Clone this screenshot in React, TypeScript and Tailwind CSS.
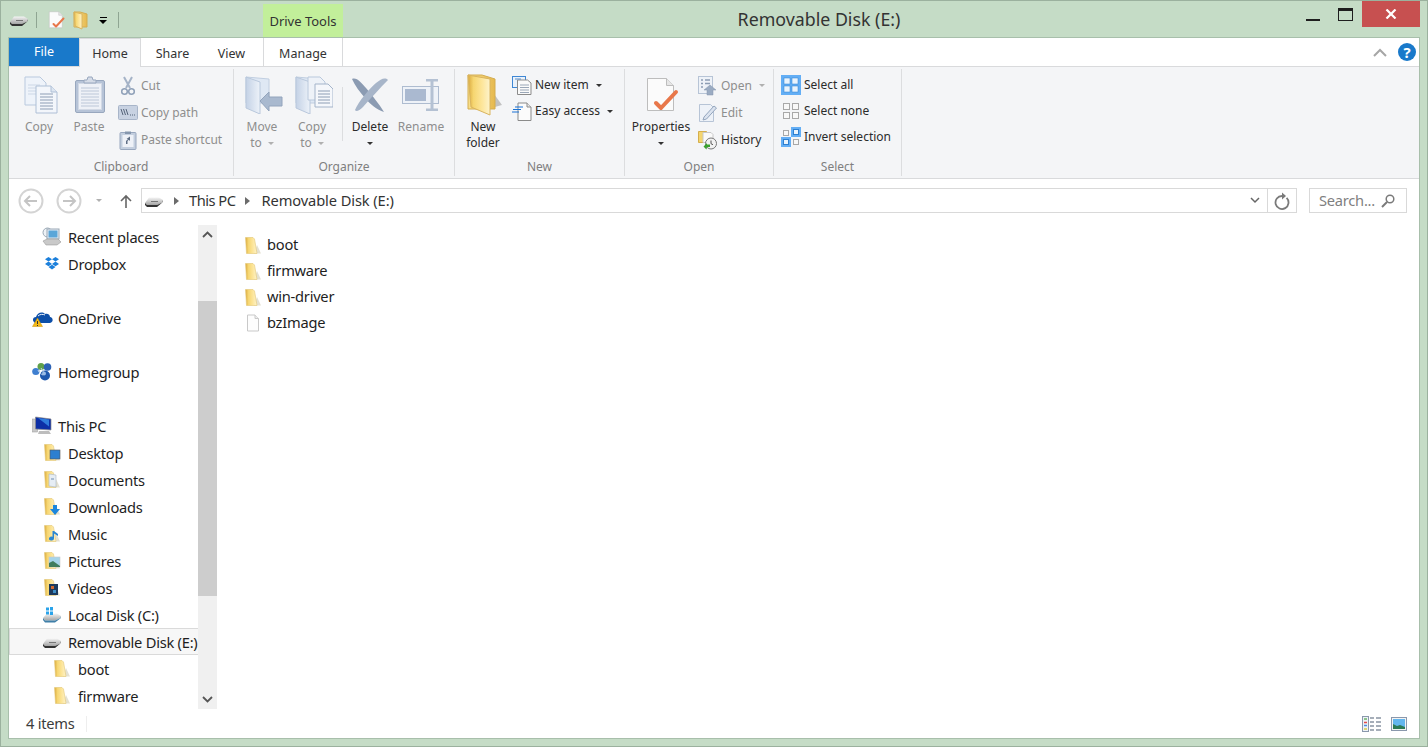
import { ReactNode } from "react";

// Shared gradients for the folder art
function Defs() {
  return (
    <svg width="0" height="0" className="absolute">
      <defs>
        <linearGradient id="fold" x1="0" y1="0" x2="1" y2="0">
          <stop offset="0" stopColor="#d9a93e" />
          <stop offset="0.25" stopColor="#f6d671" />
          <stop offset="0.65" stopColor="#fde69c" />
          <stop offset="1" stopColor="#fdf3cc" />
        </linearGradient>
        <linearGradient id="foldBack" x1="0" y1="0" x2="1" y2="0">
          <stop offset="0" stopColor="#f8df8b" />
          <stop offset="1" stopColor="#e6b94f" />
        </linearGradient>
        <linearGradient id="grayFold" x1="0" y1="0" x2="1" y2="0">
          <stop offset="0" stopColor="#c4d2e6" />
          <stop offset="1" stopColor="#edf2f9" />
        </linearGradient>
        <linearGradient id="drive" x1="0" y1="0" x2="0" y2="1">
          <stop offset="0" stopColor="#f4f4f4" />
          <stop offset="1" stopColor="#a4a4a4" />
        </linearGradient>
      </defs>
    </svg>
  );
}

function SmallFolder({ children }: { children?: ReactNode }) {
  return (
    <svg width="18" height="19" viewBox="0 0 18 19">
      <path d="M10 17.500h7L13 9Z" fill="#e4e1d2" />
      <path d="M1.500 1.500H9L10.500 3 13 17.500H2.500Z" fill="url(#fold)" stroke="#e3c673" strokeWidth="0.600" />
      {children}
    </svg>
  );
}

function Drive() {
  return (
    <svg width="20" height="14" viewBox="0 0 20 14">
      <path d="M1 9 5 3.500H15L19 6 18.500 8.500 13 11H3Z" fill="url(#drive)" />
      <path d="M1 9 3 11H13L18.500 8.500 19 6V8L13 13H3L1 11Z" fill="#333333" />
      <path d="M7 7.500h7" stroke="#777777" />
    </svg>
  );
}

function LocalDisk() {
  return (
    <svg width="20" height="18" viewBox="0 0 20 18">
      <path d="M1 12 5 7.500h10L19 10 18.500 12 13 14.500H3Z" fill="url(#drive)" />
      <path d="M1 12 3 14.500H13L18.500 12 19 10v2L13 16.500H3L1 14Z" fill="#3f7fa8" />
      <path d="M4 1.500h3v3H4Zm4-.5h3v3.500H8ZM4 5.500h3v3H4Zm4 0h3V9H8Z" fill="#2aa3ea" />
    </svg>
  );
}

function BlankFile() {
  return (
    <svg width="18" height="18" viewBox="0 0 18 18">
      <path d="M3.500 1h7.500l3.500 3.500V17h-11Z" fill="#fdfdfd" stroke="#c9c9c9" />
      <path d="M11 1v3.500h3.500" fill="#eee" stroke="#c9c9c9" />
    </svg>
  );
}

// Document with orange tick, used large on the ribbon and small on the toolbar
function Properties({ size = 36 }: { size?: number }) {
  return (
    <svg width={size} height={size} viewBox="0 0 36 36">
      <path d="M4.500 1.500h19l7 7v25h-26Z" fill="#fbfbfb" stroke="#bdbdbd" />
      <path d="M23.500 1.500v7h7" fill="#e6e6e6" stroke="#bdbdbd" />
      <path d="M13 26l5 5 15-16" fill="none" stroke="#e8774a" strokeWidth="4" strokeLinecap="round" strokeLinejoin="round" />
    </svg>
  );
}

function CopyLarge() {
  return (
    <svg width="34" height="38" viewBox="0 0 34 38" className="ml-[3px]">
      <path d="M1 1h15l6 6v22H1Z" fill="#eef3fa" stroke="#b9c9de" />
      <path d="M4 9h12M4 12h12M4 15h12M4 18h12" stroke="#ccd7e6" />
      <path d="M12 10h15l6 6v21H12Z" fill="#f3f6fb" stroke="#aebfd6" />
      <path d="M27 10v6h6" fill="#dde6f1" stroke="#aebfd6" />
      <path d="M16 18h13M16 21h13M16 24h13M16 27h13M16 30h13M16 33h13" stroke="#8d9db4" />
    </svg>
  );
}

function PasteLarge() {
  return (
    <svg width="30" height="38" viewBox="0 0 30 38" className="ml-[2px]">
      <rect x="0.500" y="4.500" width="29" height="32" rx="1.500" fill="#b6c3d7" stroke="#98a7be" />
      <rect x="3.500" y="7.500" width="23" height="26" fill="#eef1f7" stroke="#d2d9e5" />
      <path d="M6 12h18M6 15h18M6 18h18M6 21h18M6 24h18M6 27h18M6 30h18" stroke="#bcc7d8" />
      <path d="M9 7V4h3l1-3h4l1 3h3v3Z" fill="#d4dbe7" stroke="#98a7be" />
    </svg>
  );
}

function CutIcon() {
  return (
    <svg width="14" height="20" viewBox="0 0 14 20">
      <path d="M3 1 9 12M11 1 5 12" stroke="#a5b3c7" strokeWidth="2" />
      <circle cx="3.500" cy="15.500" r="2.800" fill="none" stroke="#8fa0b8" strokeWidth="1.500" />
      <circle cx="10.500" cy="15.500" r="2.800" fill="none" stroke="#8fa0b8" strokeWidth="1.500" />
    </svg>
  );
}

function CopyPathIcon() {
  return (
    <svg width="20" height="15" viewBox="0 0 20 15">
      <rect x="0.500" y="0.500" width="19" height="14" rx="1" fill="#c8d2e2" stroke="#a8b5c9" />
      <path d="M3 4l2 6M5.500 4l2 6M8 4l2 6" stroke="#55647a" fill="none" />
      <path d="M12 10h1M14 10h1M16 10h1" stroke="#55647a" />
    </svg>
  );
}

function PasteShortcutIcon() {
  return (
    <svg width="18" height="20" viewBox="0 0 18 20">
      <rect x="1" y="2.500" width="16" height="17" rx="1" fill="#c3cede" stroke="#98a7be" />
      <rect x="3.500" y="5" width="11" height="12" fill="#eef1f7" />
      <path d="M6 1.500h6V4H6Z" fill="#8596ad" />
      <path d="M7 14v-3l2-2H7.500L11 6.500V11L9.800 9.700 8.500 11v3Z" fill="#5d6d84" />
    </svg>
  );
}

function MoveToIcon() {
  return (
    <svg width="38" height="38" viewBox="0 0 38 38" className="ml-[3px]">
      <path d="M1 1l23 2v24H1Z" fill="#dfe8f4" stroke="#c0cee0" />
      <path d="M1 1l14 5v32L1 32Z" fill="url(#grayFold)" stroke="#b9c8dc" />
      <path d="M15 25 24 16v5h13v9H24v5Z" fill="#a9b9cf" stroke="#93a4bc" />
    </svg>
  );
}

function CopyToIcon() {
  return (
    <svg width="38" height="38" viewBox="0 0 38 38" className="ml-[3px]">
      <path d="M1 1l23 2v24H1Z" fill="#dfe8f4" stroke="#c0cee0" />
      <path d="M1 1l14 5v32L1 32Z" fill="url(#grayFold)" stroke="#b9c8dc" />
      <path d="M13 1h12l5 5v18H13Z" fill="#eef2f8" stroke="#b9c8dc" />
      <path d="M20 8h13l5 5v18H20Z" fill="#f5f7fb" stroke="#a4b4ca" />
      <path d="M23 15h12M23 18h12M23 21h12M23 24h12M23 27h12" stroke="#8d9db4" />
    </svg>
  );
}

function DeleteIcon() {
  return (
    <svg width="38" height="36" viewBox="0 0 38 36">
      <path d="M1 2C6 0 10 6 15 11 21 18 28 27 33 35 26 33 19 27 14 21 9 15 4 9 1 2Z" fill="#8b9bb2" />
      <path d="M37 3C34 0 30 2 25 6 18 12 8 24 4 33 5 35 8 34 12 30 20 21 29 11 37 3Z" fill="#a7b5c9" />
    </svg>
  );
}

function RenameIcon() {
  return (
    <svg width="38" height="32" viewBox="0 0 38 32">
      <rect x="0.500" y="7.500" width="36" height="17" fill="#eef2f8" stroke="#aebcd0" />
      <rect x="3" y="10" width="21" height="12" fill="#aab9d0" />
      <path d="M24 1h12M24 31h12M30 1v30" stroke="#b4c1d3" strokeWidth="3" />
    </svg>
  );
}

function NewFolderLarge() {
  return (
    <svg width="36" height="42" viewBox="0 0 36 42" className="ml-[4px]">
      <path d="M17 36 35 31 27 20Z" fill="#c2c2c2" />
      <path d="M1 1h14l13 4v30H1Z" fill="url(#foldBack)" stroke="#d4ad51" />
      <path d="M1 1l22 4v36L4 33Z" fill="url(#fold)" stroke="#d9b45f" />
    </svg>
  );
}

function NewItemIcon() {
  return (
    <svg width="20" height="19" viewBox="0 0 20 19">
      <rect x="0.500" y="0.500" width="13" height="11" fill="#eaf2fb" stroke="#3f87d4" />
      <path d="M5.500 4h10l3.500 3v11.500H5.500Z" fill="#fafafa" stroke="#8b8b8b" />
      <path d="M8 9h9M8 11.500h9M8 14h9M8 16.500h9" stroke="#9aa7b8" />
      <path d="M3 3h6" stroke="#5c8fc7" />
    </svg>
  );
}

function EasyAccessIcon() {
  return (
    <svg width="20" height="19" viewBox="0 0 20 19">
      <path d="M6 1h9l4 4v13.500H6Z" fill="#fbfbfb" stroke="#8b8b8b" />
      <path d="M15 1v4h4" fill="#e8e8e8" stroke="#8b8b8b" />
      <path d="M3 5h8M1 7.500h8M0 10h7" stroke="#1a73d6" strokeWidth="1.200" />
    </svg>
  );
}

function OpenIcon() {
  return (
    <svg width="20" height="20" viewBox="0 0 20 20">
      <rect x="0.500" y="0.500" width="14" height="17" fill="#eef2f8" stroke="#b7c4d6" />
      <path d="M3 4h2M3 7.500h2M3 11h2M7 4h5M7 7.500h5" stroke="#8d9db4" strokeWidth="1.500" />
      <path d="M6 14l6-5 6 5h-3v5H9v-5Z" fill="#9aabc2" stroke="#8496ae" strokeWidth="0.500" />
    </svg>
  );
}

function EditIcon() {
  return (
    <svg width="20" height="20" viewBox="0 0 20 20">
      <path d="M1.500 1.500h11l3 3v14h-14Z" fill="#eef2f8" stroke="#b7c4d6" />
      <path d="M6 14 16 3l2.500 2-10 11-3.500 1Z" fill="#dbe3ef" stroke="#93a5bd" />
    </svg>
  );
}

function HistoryIcon() {
  return (
    <svg width="20" height="20" viewBox="0 0 20 20">
      <path d="M0.500 1.500h8l1 1v10h-9Z" fill="#f4d56f" stroke="#d5ae4c" />
      <path d="M5 2.500h8l2 2v8H5Z" fill="#fafafa" stroke="#c8c8c8" />
      <circle cx="13" cy="13.500" r="5.500" fill="#f2f2f2" stroke="#777" />
      <path d="M13 10.500v3.200l2 1" fill="none" stroke="#555" />
      <path d="M9 13 5.500 16.500 8.500 19.500 9 17h3v-2.500H9Z" fill="#3aa02e" />
    </svg>
  );
}

function SelectAllIcon() {
  return (
    <svg width="20" height="20" viewBox="0 0 20 20">
      <rect width="20" height="20" fill="#63aef5" />
      <rect x="3" y="3" width="6" height="6" fill="#e9f3fd" stroke="#2d7fd0" strokeWidth="0.500" />
      <rect x="11" y="3" width="6" height="6" fill="#e9f3fd" stroke="#2d7fd0" strokeWidth="0.500" />
      <rect x="3" y="11" width="6" height="6" fill="#e9f3fd" stroke="#2d7fd0" strokeWidth="0.500" />
      <rect x="11" y="11" width="6" height="6" fill="#e9f3fd" stroke="#2d7fd0" strokeWidth="0.500" />
    </svg>
  );
}

function SelectNoneIcon() {
  return (
    <svg width="20" height="20" viewBox="0 0 20 20" fill="#f8f8f8" stroke="#a8a8a8">
      <rect x="2.500" y="2.500" width="6" height="6" />
      <rect x="11.500" y="2.500" width="6" height="6" />
      <rect x="2.500" y="11.500" width="6" height="6" />
      <rect x="11.500" y="11.500" width="6" height="6" />
    </svg>
  );
}

function InvertIcon() {
  return (
    <svg width="20" height="20" viewBox="0 0 20 20">
      <rect x="2.500" y="3.500" width="5" height="5" fill="#f8f8f8" stroke="#a8a8a8" />
      <rect x="10" y="0" width="10" height="10" fill="#63aef5" />
      <rect x="12.500" y="2.500" width="5" height="5" fill="#e9f3fd" stroke="#2d7fd0" />
      <rect x="0" y="10" width="10" height="10" fill="#63aef5" />
      <rect x="2.500" y="12.500" width="5" height="5" fill="#e9f3fd" stroke="#2d7fd0" />
      <rect x="12.500" y="12.500" width="5" height="5" fill="#f8f8f8" stroke="#a8a8a8" />
    </svg>
  );
}

function RecentIcon() {
  return (
    <svg width="20" height="20" viewBox="0 0 20 20">
      <circle cx="5.500" cy="5.500" r="4.500" fill="#eef2f6" stroke="#9aa8b5" />
      <rect x="5" y="2" width="12" height="10" fill="#e6edf4" stroke="#9aa8b5" />
      <rect x="6.500" y="3.500" width="9" height="7" fill="#5aa6d8" />
      <path d="M1 14 5 12h11l3 3-4 3H4Z" fill="#c9c9c9" stroke="#8c8c8c" strokeWidth="0.500" />
    </svg>
  );
}

function DropboxIcon() {
  return (
    <svg width="14" height="13" viewBox="0 0 14 13" fill="#1b7fdb">
      <path d="M3.500 0 7 2.300 3.500 4.600 0 2.300Z" />
      <path d="M10.500 0 14 2.300 10.500 4.600 7 2.300Z" />
      <path d="M3.500 4.600 7 6.900 3.500 9.200 0 6.900Z" />
      <path d="M10.500 4.600 14 6.900 10.500 9.200 7 6.900Z" />
      <path d="M3.500 10 7 7.800 10.500 10 7 12.500Z" />
    </svg>
  );
}

function OneDriveIcon() {
  return (
    <svg width="21" height="18" viewBox="0 0 21 18">
      <path d="M2 13c-2-2-1-5 2-5 1-4 6-6 9-3 3-1 5 1 5 3 3 0 4 5 0 6H3Z" fill="#0d4fa8" />
      <path d="M6 7c2-2 5-2 7-1" stroke="#f4f8fd" strokeWidth="1" fill="none" />
      <path d="M5.500 9 0.500 17.500h10Z" fill="#f4b915" stroke="#c98f0b" strokeWidth="0.500" />
      <path d="M5.500 12v3M5.500 16v1" stroke="#333" />
    </svg>
  );
}

function HomegroupIcon() {
  return (
    <svg width="20" height="19" viewBox="0 0 20 19">
      <circle cx="9" cy="4.500" r="3.500" fill="#5fa04a" />
      <circle cx="15.500" cy="5" r="3.800" fill="#2c62b5" />
      <circle cx="3.800" cy="9.500" r="3.600" fill="#3f7fd0" />
      <circle cx="13" cy="13.500" r="5" fill="#1f58ad" />
      <path d="M6 8c1 3 3 4 5 5M9 6l3 5" stroke="#c5d8f0" fill="none" />
      <circle cx="12" cy="11.500" r="2" fill="#9dbde6" />
    </svg>
  );
}

function PcIcon() {
  return (
    <svg width="20" height="20" viewBox="0 0 20 20">
      <rect x="0.500" y="3" width="5" height="13" fill="#c8c8c8" stroke="#999" strokeWidth="0.500" />
      <path d="M3.500 1 19 3v11L3.500 13Z" fill="#0d2fa6" stroke="#8b8b8b" strokeWidth="0.700" />
      <path d="M6 2 17 3.500v7Z" fill="#2f7bdc" />
      <path d="M7 15h10l2 3H6Z" fill="#bdbdbd" />
    </svg>
  );
}

function ListViewIcon() {
  return (
    <svg width="20" height="16" viewBox="0 0 20 16">
      <rect x="0.500" y="0.500" width="6" height="15" fill="#eef2f6" stroke="#8a98ac" />
      <path d="M2 3h3" stroke="#6cb46a" strokeWidth="1.500" />
      <path d="M2 6.500h3" stroke="#e24a4a" strokeWidth="1.500" />
      <path d="M2 9.500h3" stroke="#4a8be2" strokeWidth="1.500" />
      <path d="M2 13h3" stroke="#d8cc47" strokeWidth="1.500" />
      <path d="M8 2h4M14 2h5M8 6h4M14 6h5M8 10h4M14 10h5M8 14h4M14 14h5" stroke="#4e5f75" strokeWidth="1.200" />
    </svg>
  );
}

function ThumbViewIcon() {
  return (
    <svg width="16" height="14" viewBox="0 0 16 14">
      <rect x="0.500" y="0.500" width="15" height="13" fill="#f3f3f3" stroke="#8a98ac" />
      <rect x="2" y="2" width="12" height="10" fill="#63b6ee" />
      <path d="M2 12V7l4 2 3-1 5 2v2Z" fill="#2c7a55" />
    </svg>
  );
}

function Caret({ dim }: { dim?: boolean }) {
  return (
    <span
      className={`block w-0 h-0 border-x-[3px] border-x-transparent border-t-[3px] ${
        dim ? "border-t-[#b0b0b0]" : "border-t-[#333333]"
      }`}
    />
  );
}

function BigButton({
  icon,
  lines,
  width,
  disabled,
  caret,
  className = "",
}: {
  icon: ReactNode;
  lines: string[];
  width: string;
  disabled?: boolean;
  caret?: boolean;
  className?: string;
}) {
  return (
    <div className={`${width} ${className} flex flex-col items-center shrink-0`}>
      <div className="h-[47px] pb-[2px] flex items-center justify-center">{icon}</div>
      <div className={`flex flex-col items-center text-[12px] leading-[16px] ${disabled ? "text-[#8e8e8e]" : "text-[#2b2b2b]"}`}>
        {lines.map((line, i) => (
          <div key={line} className="h-[16px] flex items-center gap-[6px] whitespace-nowrap">
            {line}
            {caret && i === lines.length - 1 && lines.length > 1 && <Caret dim={disabled} />}
          </div>
        ))}
        {caret && lines.length === 1 && (
          <div className="h-[16px] flex items-center">
            <Caret dim={disabled} />
          </div>
        )}
      </div>
    </div>
  );
}

function SmallItem({
  icon,
  label,
  disabled,
  caret,
  height,
}: {
  icon: ReactNode;
  label: string;
  disabled?: boolean;
  caret?: boolean;
  height: string;
}) {
  return (
    <div className={`${height} flex items-center whitespace-nowrap text-[12px] ${disabled ? "text-[#8e8e8e]" : "text-[#2b2b2b]"}`}>
      <span className="w-[20px] mr-[3px] flex items-center justify-center">{icon}</span>
      {label}
      {caret && (
        <span className="ml-[7px] flex items-center">
          <Caret dim={disabled} />
        </span>
      )}
    </div>
  );
}

function Group({ label, width, children }: { label: string; width: string; children: ReactNode }) {
  return (
    <div className={`${width} flex flex-col shrink-0 border-r border-[#dcdddf] my-[2px]`}>
      <div className="h-[89px] pt-[3px] flex items-start">{children}</div>
      <div className="flex-1 flex items-center justify-center text-[12px] text-[#7f7f7f]">{label}</div>
    </div>
  );
}

const NAV_ROWS: { label?: string; icon?: ReactNode; indent?: number; selected?: boolean }[] = [
  { label: "Recent places", icon: <RecentIcon />, indent: 33 },
  { label: "Dropbox", icon: <DropboxIcon />, indent: 33 },
  {},
  { label: "OneDrive", icon: <OneDriveIcon />, indent: 23 },
  {},
  { label: "Homegroup", icon: <HomegroupIcon />, indent: 23 },
  {},
  { label: "This PC", icon: <PcIcon />, indent: 23 },
  {
    label: "Desktop",
    indent: 33,
    icon: (
      <SmallFolder>
        <rect x="7" y="7" width="10" height="9" fill="#2d7fd0" stroke="#555" strokeWidth="0.600" />
      </SmallFolder>
    ),
  },
  {
    label: "Documents",
    indent: 33,
    icon: (
      <SmallFolder>
        <path d="M6 4l7 1v12l-7-1Z" fill="#e6edf4" stroke="#a9b5c4" strokeWidth="0.600" />
        <path d="M8 9h3" stroke="#6c8cb0" />
      </SmallFolder>
    ),
  },
  {
    label: "Downloads",
    indent: 33,
    icon: (
      <SmallFolder>
        <path d="M10 8h4v4h3l-5 6-5-6h3Z" fill="#1c86dc" />
      </SmallFolder>
    ),
  },
  {
    label: "Music",
    indent: 33,
    icon: (
      <SmallFolder>
        <path d="M11 7v7.500a2.500 2 0 1 1-1.500-1.800V7Zm0 0 4 3v2l-4-2.500Z" fill="#2a86d2" />
      </SmallFolder>
    ),
  },
  {
    label: "Pictures",
    indent: 33,
    icon: (
      <SmallFolder>
        <rect x="6" y="6" width="11" height="10" fill="#a5d4ea" stroke="#c8c8c8" strokeWidth="0.600" />
        <path d="M6 16v-4l4-2 7 5v1Z" fill="#3f7d5f" />
      </SmallFolder>
    ),
  },
  {
    label: "Videos",
    indent: 33,
    icon: (
      <SmallFolder>
        <rect x="6" y="6" width="9" height="11" fill="#1d3a5c" />
        <path d="M8 8h3v3H8Z" fill="#d2692e" />
        <path d="M10 12h3v3h-3Z" fill="#3f8dc5" />
      </SmallFolder>
    ),
  },
  { label: "Local Disk (C:)", icon: <LocalDisk />, indent: 33 },
  { label: "Removable Disk (E:)", icon: <Drive />, indent: 32, selected: true },
  { label: "boot", icon: <SmallFolder />, indent: 43 },
  { label: "firmware", icon: <SmallFolder />, indent: 43 },
];

const FILES = [
  { name: "boot", icon: <SmallFolder /> },
  { name: "firmware", icon: <SmallFolder /> },
  { name: "win-driver", icon: <SmallFolder /> },
  { name: "bzImage", icon: <BlankFile /> },
];

export default function App() {
  const font = { fontFamily: '"Noto Sans", "Open Sans", sans-serif' };

  return (
    <div
      style={font}
      className="w-[1428px] h-[747px] overflow-hidden flex flex-col bg-[#c5dcc6] border border-[#9bb19e]"
    >
      <Defs />

      {/* Title bar */}
      <div className="h-[36px] shrink-0 flex items-start">
        <div className="w-[262px] h-full flex items-center pl-[8px] pt-[2px] shrink-0">
          <Drive />
          <span className="ml-[7px] w-px h-[16px] bg-[#8fa592]" />
          <span className="ml-[10px]">
            <Properties size={18} />
          </span>
          <span className="ml-[8px] flex">
            <svg width="15" height="19" viewBox="0 0 15 19">
              <path d="M1 1h6l7 2v13H1Z" fill="url(#foldBack)" stroke="#d4ad51" />
              <path d="M1 1l8 2v15l-7-3Z" fill="url(#fold)" stroke="#d9b45f" />
            </svg>
          </span>
          <span className="ml-[11px] flex flex-col items-center gap-[2px]">
            <span className="w-[7px] h-px bg-black" />
            <span className="w-0 h-0 border-x-[4px] border-x-transparent border-t-[4px] border-t-black" />
          </span>
          <span className="ml-[11px] w-px h-[16px] bg-[#8fa592]" />
        </div>
        <div className="w-[80px] h-[36px] mt-[3px] shrink-0 bg-[#c2ef9a] flex items-center justify-center text-[13px] text-[#333333]">
          Drive Tools
        </div>
        <div className="flex-1 h-full flex items-center justify-center pr-[2px] text-[17.8px] text-[#333333]">
          Removable Disk (E:)
        </div>
        <div className="flex items-start shrink-0">
          <div className="w-[32px] h-[20px] flex justify-center items-end">
            <span className="w-[14px] h-[2px] bg-[#1e1e1e]" />
          </div>
          <div className="w-[33px] h-[26px] flex justify-center pt-[7px]">
            <span className="w-[15px] h-[13px] border border-[#1e1e1e] border-t-[3px]" />
          </div>
          <div className="w-[58px] h-[26px] mr-[7px] bg-[#c75050] flex items-center justify-center">
            <svg width="12" height="10" viewBox="0 0 12 10">
              <path d="M1.500 0.500 10.500 9.500M10.500 0.500 1.500 9.500" stroke="#fff" strokeWidth="2.200" />
            </svg>
          </div>
        </div>
      </div>

      {/* Explorer frame */}
      <div className="mx-[7px] flex-1 min-h-0 flex flex-col bg-white border border-[#a8bfab] mb-[7px]">
        {/* Ribbon tabs */}
        <div className="h-[29px] shrink-0 flex items-stretch text-[12.5px] text-[#333333] border-b border-[#d9dadc]">
          <div className="w-[70px] bg-[#1979ca] text-white flex items-center justify-center pt-[1px]">File</div>
          <div className="w-[62px] -mb-px bg-[#f4f5f7] border-x border-t border-[#d9dadc] flex items-center justify-center pt-[3px]">
            Home
          </div>
          <div className="w-[63px] flex items-center justify-center pt-[4px]">Share</div>
          <div className="w-[55px] flex items-center justify-center pt-[4px]">View</div>
          <div className="w-[80px] ml-[4px] border-x border-[#d9dadc] flex items-center justify-center pt-[4px]">Manage</div>
          <div className="flex-1 flex items-center justify-end pr-[3px]">
            <svg width="14" height="9" viewBox="0 0 14 9" className="mr-[11px]">
              <path d="M1 8 7 2l6 6" fill="none" stroke="#a6a6a6" strokeWidth="2" />
            </svg>
            <span className="w-[18px] h-[18px] rounded-full bg-[#1979ca] text-white font-bold text-[15px] flex items-center justify-center leading-none">
              ?
            </span>
          </div>
        </div>

        {/* Ribbon */}
        <div className="h-[112px] shrink-0 flex bg-[#f4f5f7] border-b border-[#d9dadc]">
          <Group label="Clipboard" width="w-[225px]">
            <BigButton icon={<CopyLarge />} lines={["Copy"]} width="w-[44px]" className="ml-[8px]" disabled />
            <BigButton icon={<PasteLarge />} lines={["Paste"]} width="w-[40px]" className="ml-[8px]" disabled />
            <div className="ml-[9px]">
              <SmallItem icon={<CutIcon />} label="Cut" height="h-[27px]" disabled />
              <SmallItem icon={<CopyPathIcon />} label="Copy path" height="h-[27px]" disabled />
              <SmallItem icon={<PasteShortcutIcon />} label="Paste shortcut" height="h-[27px]" disabled />
            </div>
          </Group>
          <Group label="Organize" width="w-[221px]">
            <BigButton icon={<MoveToIcon />} lines={["Move", "to"]} width="w-[44px]" className="ml-[6px]" disabled caret />
            <BigButton icon={<CopyToIcon />} lines={["Copy", "to"]} width="w-[44px]" className="ml-[6px]" disabled caret />
            <span className="ml-[8px] mt-[15px] w-px h-[54px] bg-[#dcdddf]" />
            <BigButton icon={<DeleteIcon />} lines={["Delete"]} width="w-[44px]" className="ml-[5px]" caret />
            <BigButton icon={<RenameIcon />} lines={["Rename"]} width="w-[50px]" className="ml-[4px]" disabled />
          </Group>
          <Group label="New" width="w-[170px]">
            <BigButton icon={<NewFolderLarge />} lines={["New", "folder"]} width="w-[44px]" className="ml-[6px]" />
            <div className="ml-[7px]">
              <SmallItem icon={<NewItemIcon />} label="New item" height="h-[26px]" caret />
              <SmallItem icon={<EasyAccessIcon />} label="Easy access" height="h-[26px]" caret />
            </div>
          </Group>
          <Group label="Open" width="w-[149px]">
            <BigButton icon={<Properties />} lines={["Properties"]} width="w-[66px]" className="ml-[3px]" caret />
            <div className="ml-[4px]">
              <SmallItem icon={<OpenIcon />} label="Open" height="h-[27px]" disabled caret />
              <SmallItem icon={<EditIcon />} label="Edit" height="h-[27px]" disabled />
              <SmallItem icon={<HistoryIcon />} label="History" height="h-[27px]" />
            </div>
          </Group>
          <Group label="Select" width="w-[128px]">
            <div className="ml-[7px]">
              <SmallItem icon={<SelectAllIcon />} label="Select all" height="h-[26px]" />
              <SmallItem icon={<SelectNoneIcon />} label="Select none" height="h-[26px]" />
              <SmallItem icon={<InvertIcon />} label="Invert selection" height="h-[26px]" />
            </div>
          </Group>
        </div>

        {/* Address bar */}
        <div className="h-[46px] shrink-0 flex items-start pt-[9px] text-[14.67px] tracking-[-0.25px]">
          <div className="w-[132px] h-[25px] flex items-center shrink-0">
            <svg width="26" height="26" viewBox="0 0 26 26" className="ml-[9px]">
              <circle cx="13" cy="13" r="11.500" fill="none" stroke="#d4d4d4" strokeWidth="2" />
              <path d="M7 13h12M12 8l-5 5 5 5" fill="none" stroke="#c4c4c4" strokeWidth="2" />
            </svg>
            <svg width="26" height="26" viewBox="0 0 26 26" className="ml-[12px]">
              <circle cx="13" cy="13" r="11.500" fill="none" stroke="#d4d4d4" strokeWidth="2" />
              <path d="M7 13h12M14 8l5 5-5 5" fill="none" stroke="#c4c4c4" strokeWidth="2" />
            </svg>
            <span className="ml-[14px]">
              <Caret dim />
            </span>
            <svg width="12" height="14" viewBox="0 0 12 14" className="ml-[18px]">
              <path d="M6 14V2M1 7l5-5 5 5" fill="none" stroke="#666666" strokeWidth="1.600" />
            </svg>
          </div>
          <div className="w-[1156px] h-[25px] shrink-0 flex items-center border border-[#d9d9d9] text-[#333333]">
            <span className="ml-[2px] flex">
              <Drive />
            </span>
            <span className="ml-[10px] w-0 h-0 border-y-[4px] border-y-transparent border-l-[5px] border-l-[#6b6b6b]" />
            <span className="ml-[10px] pb-[2px] tracking-[-0.5px]">This PC</span>
            <span className="ml-[10px] w-0 h-0 border-y-[4px] border-y-transparent border-l-[5px] border-l-[#6b6b6b]" />
            <span className="ml-[11px] pb-[2px] tracking-[-0.1px]">Removable Disk (E:)</span>
            <span className="ml-auto w-[26px] h-full flex items-center justify-center border-r border-[#d9d9d9]">
              <svg width="10" height="7" viewBox="0 0 10 7">
                <path d="M1 1l4 4 4-4" fill="none" stroke="#666666" strokeWidth="1.500" />
              </svg>
            </span>
            <span className="w-[28px] h-full flex items-center justify-center">
              <svg width="16" height="18" viewBox="0 0 16 18">
                <path d="M12.600 5.900A6.500 6.500 0 1 1 8 4" fill="none" stroke="#7a7a7a" strokeWidth="1.800" />
                <path d="M8 0.500v7l4-3.500Z" fill="#7a7a7a" />
              </svg>
            </span>
          </div>
          <div className="ml-[12px] w-[98px] h-[25px] shrink-0 flex items-center justify-between border border-[#d9d9d9] pl-[9px] pr-[11px] text-[#7f7f7f]">
            <span className="pb-[2px]">Search...</span>
            <svg width="14" height="14" viewBox="0 0 14 14">
              <circle cx="9" cy="5" r="3.800" fill="none" stroke="#7a7a7a" strokeWidth="1.500" />
              <path d="M6 8 1 13" stroke="#7a7a7a" strokeWidth="2" />
            </svg>
          </div>
        </div>

        {/* Navigation pane and file list */}
        <div className="flex-1 min-h-0 flex text-[14.67px] text-[#1e1e1e] tracking-[-0.25px]">
          <div className="w-[189px] shrink-0 overflow-hidden">
            <div className="-mt-[2px]">
              {NAV_ROWS.map((row, i) => (
                <div
                  key={i}
                  style={{ paddingLeft: row.indent }}
                  className={`h-[27px] flex items-center whitespace-nowrap ${
                    row.selected ? "bg-[#f7f7f7] border border-r-0 border-[#dadada]" : ""
                  }`}
                >
                  {row.label && (
                    <>
                      <span className="w-[22px] mr-[5px] -ml-[1px] flex justify-center shrink-0">{row.icon}</span>
                      {row.label}
                    </>
                  )}
                </div>
              ))}
            </div>
          </div>
          <div className="w-[19px] shrink-0 bg-[#f0f0f0] flex flex-col">
            <div className="h-[76px] pt-[6px] flex justify-center items-start">
              <svg width="11" height="7" viewBox="0 0 11 7">
                <path d="M1 6l4.500-4.500L10 6" fill="none" stroke="#555555" strokeWidth="1.800" />
              </svg>
            </div>
            <div className="h-[295px] bg-[#cdcdcd]" />
            <div className="flex-1 flex justify-center items-end pb-[6px]">
              <svg width="11" height="7" viewBox="0 0 11 7">
                <path d="M1 1l4.500 4.500L10 1" fill="none" stroke="#555555" strokeWidth="1.800" />
              </svg>
            </div>
          </div>
          <div className="flex-1 pl-[27px] pt-[7px]">
            {FILES.map((file) => (
              <div key={file.name} className="h-[26px] flex items-center">
                <span className="w-[18px] mr-[5px] flex">{file.icon}</span>
                <span className="pb-[2px]">{file.name}</span>
              </div>
            ))}
          </div>
        </div>

        {/* Status bar */}
        <div className="h-[29px] shrink-0 flex items-center pl-[17px] pr-[12px] text-[14.67px] text-[#3c3c3c] tracking-[-0.25px]">
          <span className="w-[60px] pb-[2px]">4 items</span>
          <span className="w-px h-[16px] bg-[#eeeeee]" />
          <span className="ml-auto flex items-center gap-[9px]">
            <ListViewIcon />
            <ThumbViewIcon />
          </span>
        </div>
      </div>
    </div>
  );
}
